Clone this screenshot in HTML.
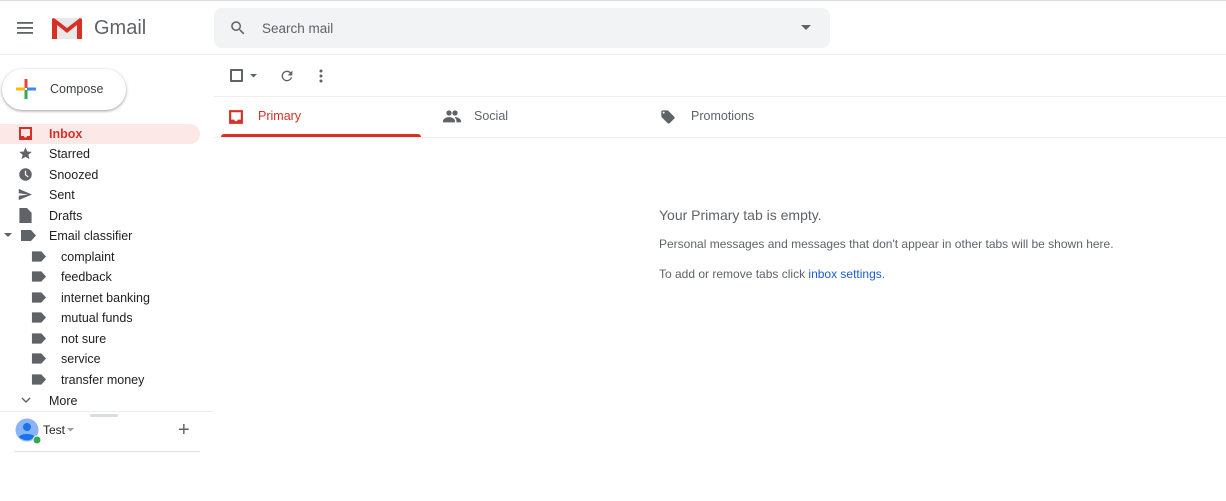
<!DOCTYPE html>
<html><head><meta charset="utf-8"><style>
*{margin:0;padding:0;box-sizing:border-box}
body{width:1226px;height:501px;overflow:hidden;background:#fff;font-family:"Liberation Sans",Arial,sans-serif;color:#202124;position:relative}
.a{position:absolute}
.row{position:absolute;left:0;width:200px;height:20px;font-size:12.5px;line-height:22px;color:#202124}
.row .t{position:absolute;left:49px}
.row.s .t{left:61px}
.row svg{position:absolute;top:3px}
.g{fill:#5f6368}
</style></head><body>
<div class="a" style="left:0;top:0;width:1226px;height:1px;background:#dadce0"></div>
<div class="a" style="left:0;top:54px;width:1226px;height:1px;background:#eceff1"></div>
<svg class="a" style="left:16px;top:19px" width="18" height="18" viewBox="0 0 18 18"><rect x="1" y="3" width="16" height="1.8" class="g"/><rect x="1" y="8" width="16" height="1.8" class="g"/><rect x="1" y="13" width="16" height="1.8" class="g"/></svg>
<svg class="a" style="left:51px;top:17px" width="32" height="22" viewBox="0 0 32 22"><rect x="1" y="1" width="30" height="21" fill="#e8e8e8"/><path d="M1 2v20h5V8l10 8 10-8v14h5V2l-2-1-13 10L3 1z" fill="#d93025"/></svg>
<div class="a" style="left:94px;top:17px;font-size:20px;color:#5f6368">Gmail</div>
<div class="a" style="left:214px;top:8px;width:616px;height:40px;background:#f1f3f4;border-radius:8px"></div>
<svg class="a" style="left:229px;top:19px" width="18" height="18" viewBox="0 0 24 24"><path d="M15.5 14h-.8l-.3-.3A6.5 6.5 0 1 0 9.5 16a6.5 6.5 0 0 0 4.2-1.6l.3.3v.8l5 5 1.5-1.5-5-5zm-6 0a4.5 4.5 0 1 1 0-9 4.5 4.5 0 0 1 0 9z" class="g"/></svg>
<div class="a" style="left:262px;top:21px;font-size:13.5px;color:#5f6368">Search mail</div>
<svg class="a" style="left:800px;top:24px" width="12" height="8"><path d="M1 1h10L6 6z" class="g"/></svg>
<div class="a" style="left:2px;top:69px;width:124px;height:41px;border-radius:21px;background:#fff;box-shadow:0 1px 3px rgba(60,64,67,.35),0 1px 2px rgba(60,64,67,.2)"></div>
<svg class="a" style="left:15px;top:78px" width="22" height="22" viewBox="0 0 22 22"><rect x="9.5" y="1" width="3" height="9" fill="#ea4335"/><rect x="12" y="9.5" width="9" height="3" fill="#4285f4"/><rect x="9.5" y="12" width="3" height="9" fill="#34a853"/><rect x="1" y="9.5" width="9" height="3" fill="#fbbc04"/></svg>
<div class="a" style="left:50px;top:82px;font-size:12.5px;color:#3c4043">Compose</div>
<div class="a" style="left:0;top:124px;width:200px;height:20px;background:#fce8e6;border-radius:0 10px 10px 0"></div>
<div class="row" style="top:123px;color:#d93025;font-weight:bold"><svg style="left:18px" width="15" height="15" viewBox="0 0 15 15"><path d="M1 1h13v13H1z M3 3v7h3a1.5 1.5 0 0 0 3 0h3V3z" fill="#d93025" fill-rule="evenodd"/></svg><span class="t">Inbox</span></div>
<div class="row" style="top:143px"><svg style="left:18px" width="15" height="15" viewBox="0 0 24 24"><path d="M12 17.3l6.2 3.7-1.6-7 5.4-4.7-7.2-.6L12 2 9.2 8.7 2 9.3l5.4 4.7-1.6 7z" class="g"/></svg><span class="t">Starred</span></div>
<div class="row" style="top:164px"><svg style="left:18px" width="15" height="15" viewBox="0 0 24 24"><circle cx="12" cy="12" r="10" class="g"/><path d="M11 6h2v6l4 3-1 1.5-5-3.5z" fill="#fff"/></svg><span class="t">Snoozed</span></div>
<div class="row" style="top:184px"><svg style="left:17px" width="16" height="15" viewBox="0 0 24 24"><path d="M2 21l21-9L2 3v7l15 2-15 2z" class="g"/></svg><span class="t">Sent</span></div>
<div class="row" style="top:205px"><svg style="left:19px" width="13" height="15" viewBox="0 0 13 16"><path d="M0 0h8l5 5v11H0z" class="g"/></svg><span class="t">Drafts</span></div>
<div class="row" style="top:225px"><svg style="left:4px;top:8px" width="8" height="5"><path d="M0 0h8L4 4z" class="g"/></svg><svg style="left:20px;top:5px" width="16" height="11" viewBox="0 0 16 11"><path d="M1 0h10l5 5.5L11 11H1z" class="g"/></svg><span class="t">Email classifier</span></div>
<div class="row s" style="top:246px"><svg style="left:31px;top:5px" width="15" height="11" viewBox="0 0 16 11"><path d="M1 0h10l5 5.5L11 11H1z" class="g"/></svg><span class="t">complaint</span></div>
<div class="row s" style="top:266px"><svg style="left:31px;top:5px" width="15" height="11" viewBox="0 0 16 11"><path d="M1 0h10l5 5.5L11 11H1z" class="g"/></svg><span class="t">feedback</span></div>
<div class="row s" style="top:287px"><svg style="left:31px;top:5px" width="15" height="11" viewBox="0 0 16 11"><path d="M1 0h10l5 5.5L11 11H1z" class="g"/></svg><span class="t">internet banking</span></div>
<div class="row s" style="top:307px"><svg style="left:31px;top:5px" width="15" height="11" viewBox="0 0 16 11"><path d="M1 0h10l5 5.5L11 11H1z" class="g"/></svg><span class="t">mutual funds</span></div>
<div class="row s" style="top:328px"><svg style="left:31px;top:5px" width="15" height="11" viewBox="0 0 16 11"><path d="M1 0h10l5 5.5L11 11H1z" class="g"/></svg><span class="t">not sure</span></div>
<div class="row s" style="top:348px"><svg style="left:31px;top:5px" width="15" height="11" viewBox="0 0 16 11"><path d="M1 0h10l5 5.5L11 11H1z" class="g"/></svg><span class="t">service</span></div>
<div class="row s" style="top:369px"><svg style="left:31px;top:5px" width="15" height="11" viewBox="0 0 16 11"><path d="M1 0h10l5 5.5L11 11H1z" class="g"/></svg><span class="t">transfer money</span></div>
<div class="row" style="top:390px"><svg style="left:21px;top:7px" width="10" height="7"><path d="M1 1l4 4 4-4" stroke="#5f6368" stroke-width="1.4" fill="none"/></svg><span class="t">More</span></div>
<div class="a" style="left:0;top:411px;width:214px;height:1px;background:#eceff1"></div>
<div class="a" style="left:90px;top:414px;width:28px;height:3px;background:#dadce0;border-radius:2px"></div>
<svg class="a" style="left:14px;top:418px" width="28" height="28" viewBox="0 0 28 28"><circle cx="13" cy="12" r="11.5" fill="#8ab4f8"/><circle cx="13" cy="9" r="4" fill="#1a73e8"/><path d="M5 19c2-4 14-4 16 0a11.5 11.5 0 0 1-16 0z" fill="#1a73e8"/><circle cx="23" cy="22" r="4.5" fill="#fff"/><circle cx="23" cy="22" r="3.5" fill="#34a853"/></svg>
<div class="a" style="left:43px;top:423px;font-size:12px;color:#202124">Test</div>
<svg class="a" style="left:67px;top:428px" width="7" height="4"><path d="M0 0h7L3.5 3.5z" fill="#9aa0a6"/></svg>
<div class="a" style="left:178px;top:419px;font-size:20px;color:#5f6368;font-weight:300">+</div>
<div class="a" style="left:14px;top:451px;width:186px;height:1px;background:#e0e0e0"></div>
<div class="a" style="left:230px;top:69px;width:13px;height:13px;border:2px solid #5f6368;border-radius:1px"></div>
<svg class="a" style="left:250px;top:74px" width="7" height="4"><path d="M0 0h7L3.5 3.5z" class="g"/></svg>
<svg class="a" style="left:279px;top:68px" width="16" height="16" viewBox="0 0 24 24"><path d="M17.65 6.35A8 8 0 1 0 19.7 14h-2.1A6 6 0 1 1 12 6c1.66 0 3.14.69 4.22 1.78L13 11h7V4z" class="g"/></svg>
<svg class="a" style="left:319px;top:69px" width="4" height="14"><circle cx="2" cy="2" r="1.5" class="g"/><circle cx="2" cy="7" r="1.5" class="g"/><circle cx="2" cy="12" r="1.5" class="g"/></svg>
<div class="a" style="left:214px;top:96px;width:1012px;height:1px;background:#eceff1"></div>
<div class="a" style="left:214px;top:137px;width:1012px;height:1px;background:#eceff1"></div>
<svg class="a" style="left:228px;top:109px" width="16" height="16" viewBox="0 0 15 15"><path d="M1 1h13v13H1z M3 3v7h3a1.5 1.5 0 0 0 3 0h3V3z" fill="#d93025" fill-rule="evenodd"/></svg>
<div class="a" style="left:258px;top:109px;font-size:12.5px;color:#d93025">Primary</div>
<div class="a" style="left:221px;top:134px;width:200px;height:3px;background:#d93025;border-radius:3px 3px 0 0"></div>
<svg class="a" style="left:443px;top:109px" width="18" height="14" viewBox="0 0 24 18"><circle cx="8" cy="5" r="3.5" class="g"/><circle cx="16" cy="5" r="3.5" class="g"/><path d="M0 16c0-4 5-5.5 8-5.5s8 1.5 8 5.5v1.5H0zM16 10.5c3 0 8 1.5 8 5.5v1.5h-6v-1.5c0-2-1-3.5-2-4.5z" class="g"/></svg>
<div class="a" style="left:474px;top:109px;font-size:12.5px;color:#5f6368">Social</div>
<svg class="a" style="left:660px;top:109px" width="16" height="16" viewBox="0 0 24 24"><path d="M21.4 11.6l-9-9C12.1 2.2 11.6 2 11 2H4a2 2 0 0 0-2 2v7c0 .6.2 1.1.6 1.4l9 9c.4.4.9.6 1.4.6s1-.2 1.4-.6l7-7c.4-.4.6-.9.6-1.4s-.2-1-.6-1.4zM5.5 7a1.5 1.5 0 1 1 0-3 1.5 1.5 0 0 1 0 3z" class="g"/></svg>
<div class="a" style="left:691px;top:109px;font-size:12.5px;color:#5f6368">Promotions</div>
<div class="a" style="left:659px;top:207px;font-size:14px;color:#5f6368">Your Primary tab is empty.</div>
<div class="a" style="left:659px;top:237px;font-size:12px;color:#5f6368">Personal messages and messages that don't appear in other tabs will be shown here.</div>
<div class="a" style="left:659px;top:267px;font-size:12px;color:#5f6368">To add or remove tabs click <span style="color:#1a5bd6">inbox settings</span>.</div>
</body></html>
